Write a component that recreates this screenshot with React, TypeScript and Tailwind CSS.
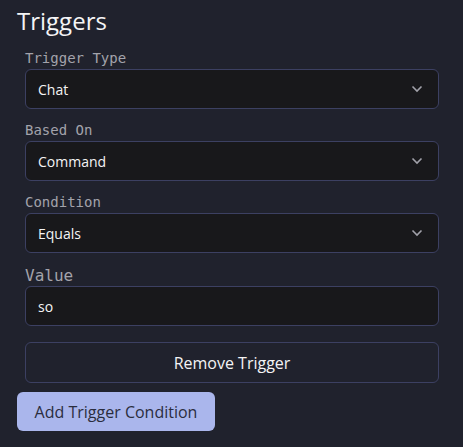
import { useState } from 'react';

const Chevron = () => (
  <svg width="12" height="8" viewBox="0 0 12 8" className="text-[#a1a1aa]">
    <path d="M1.5 1.5 L6 6 L10.5 1.5" fill="none" stroke="currentColor" strokeWidth="1.6" />
  </svg>
);

const SelectField = ({ label, value }: { label: string; value: string }) => (
  <div>
    <p className="font-['DejaVu_Sans_Mono',monospace] text-[14px] leading-[16px] text-[#a3a3ab] mb-[3px]">
      {label}
    </p>
    <div className="flex items-center justify-between h-[40px] rounded-md border border-[#3c4062] bg-[#18181b] pl-[12px] pr-[15px]">
      <span className="text-[14px] text-[#f4f4f5]">{value}</span>
      <Chevron />
    </div>
  </div>
);

const App = () => {
  const [val] = useState('so');

  return (
    <div className="min-h-screen w-[463px] h-[447px] bg-[#20222d] font-['Open_Sans',sans-serif] px-[17px] pt-[4px]">
      <h2 className="text-[24px] leading-[34px] text-[#f5f5f5] mb-[12px]">Triggers</h2>

      <div className="flex flex-col gap-[13px] pl-[8px] pr-[7px]">
        <SelectField label="Trigger Type" value="Chat" />
        <SelectField label="Based On" value="Command" />
        <SelectField label="Condition" value="Equals" />
        <div>
          <p className="font-['DejaVu_Sans_Mono',monospace] text-[16px] leading-[20px] text-[#a3a3ab]">
            Value
          </p>
          <div className="flex items-center h-[40px] rounded-md border border-[#3c4062] bg-[#18181b] px-[12px]">
            <span className="text-[14px] text-[#f4f4f5]">{val}</span>
          </div>
        </div>
        <button className="mt-[3px] h-[41px] rounded-md border border-[#3c4062] text-[16px] font-medium text-[#f4f4f5]">
          Remove Trigger
        </button>
      </div>

      <button className="mt-[9px] h-[39px] w-[198px] rounded-md bg-[#aab6ec] text-[16px] text-[#2a2d3e]">
        Add Trigger Condition
      </button>
    </div>
  );
};

export default App;
